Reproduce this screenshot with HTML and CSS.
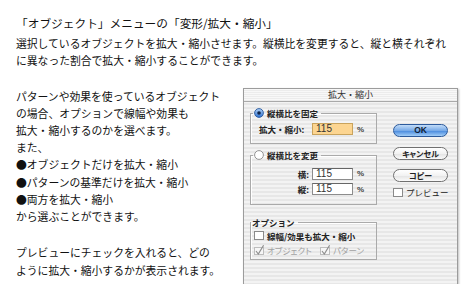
FILE: index.html
```html
<!DOCTYPE html>
<html lang="ja">
<head>
    <meta charset="UTF-8">
    <meta name="viewport" content="width=device-width, initial-scale=1.0">
    <title>変形/拡大・縮小</title>
    <link rel="stylesheet" href="styles.css">
</head>
<body>
    <div class="page">
        <h1 class="title">「オブジェクト」メニューの「変形/拡大・縮小」</h1>
        <p class="lead">選択しているオブジェクトを拡大・縮小させます。縦横比を変更すると、縦と横それぞれ<br>に異なった割合で拡大・縮小することができます。</p>

        <div class="main">
            <div class="desc">
                <p>パターンや効果を使っているオブジェクト<br>の場合、オプションで線幅や効果も<br>拡大・縮小するのかを選べます。<br>また、<br>●オブジェクトだけを拡大・縮小<br>●パターンの基準だけを拡大・縮小<br>●両方を拡大・縮小<br>から選ぶことができます。</p>
                <p>プレビューにチェックを入れると、どの<br>ように拡大・縮小するかが表示されます。</p>
            </div>

            <div class="dialog">
                <div class="titlebar">拡大・縮小</div>
                <div class="dialog-body">
                    <div class="groups">
                        <fieldset class="group group-fixed">
                            <legend>
                                <svg class="radio" viewBox="0 0 10 10" width="10" height="10">
                                    <defs>
                                        <linearGradient id="radioOn" x1="0" y1="0" x2="0" y2="1">
                                            <stop offset="0" stop-color="#b4d4f7"/>
                                            <stop offset="1" stop-color="#2b6fd0"/>
                                        </linearGradient>
                                    </defs>
                                    <circle cx="5" cy="5" r="4.4" fill="url(#radioOn)" stroke="#29599e" stroke-width="0.9"/>
                                    <circle cx="5" cy="5" r="1.8" fill="#0e2448"/>
                                </svg>
                                縦横比を固定
                            </legend>
                            <div class="row">
                                <span class="label">拡大・縮小:</span>
                                <span class="field active">115</span>
                                <span class="unit">%</span>
                            </div>
                        </fieldset>

                        <fieldset class="group group-free">
                            <legend>
                                <svg class="radio" viewBox="0 0 10 10" width="10" height="10">
                                    <circle cx="5" cy="5" r="4.4" fill="#fff" stroke="#8a8a8a" stroke-width="0.9"/>
                                </svg>
                                縦横比を変更
                            </legend>
                            <div class="row">
                                <span class="label right">横:</span>
                                <span class="field">115</span>
                                <span class="unit">%</span>
                            </div>
                            <div class="row">
                                <span class="label right">縦:</span>
                                <span class="field">115</span>
                                <span class="unit">%</span>
                            </div>
                        </fieldset>

                        <fieldset class="group group-options">
                            <legend>オプション</legend>
                            <div class="check-row">
                                <svg class="check" viewBox="0 0 10 9" width="10" height="9">
                                    <rect x="0.5" y="0.5" width="9" height="8" fill="#fff" stroke="#8a8a8a"/>
                                </svg>
                                <span>線幅/効果も拡大・縮小</span>
                            </div>
                            <div class="check-row disabled">
                                <svg class="check" viewBox="0 0 10 10" width="10" height="10">
                                    <rect x="0.5" y="2.5" width="9" height="7" fill="#f6f6f6" stroke="#bdbdbd"/>
                                    <path d="M2 6 L4.3 9 L9.6 0.3" stroke="#8f8f8f" stroke-width="1.2" fill="none"/>
                                </svg>
                                <span class="opt-object">オブジェクト</span>
                                <svg class="check" viewBox="0 0 10 10" width="10" height="10">
                                    <rect x="0.5" y="2.5" width="9" height="7" fill="#f6f6f6" stroke="#bdbdbd"/>
                                    <path d="M2 6 L4.3 9 L9.6 0.3" stroke="#8f8f8f" stroke-width="1.2" fill="none"/>
                                </svg>
                                <span>パターン</span>
                            </div>
                        </fieldset>
                    </div>

                    <div class="buttons">
                        <div class="btn btn-ok">OK</div>
                        <div class="btn btn-cancel">キャンセル</div>
                        <div class="btn btn-copy">コピー</div>
                        <div class="preview">
                            <svg class="check" viewBox="0 0 10 9" width="10" height="9">
                                <rect x="0.5" y="0.5" width="9" height="8" fill="#fff" stroke="#8a8a8a"/>
                            </svg>
                            <span>プレビュー</span>
                        </div>
                    </div>
                </div>
            </div>
        </div>
    </div>
</body>
</html>
```

FILE: styles.css
```css
body {
    margin: 0;
    background-color: #fff;
    color: #111;
    font-family: "Noto Sans CJK JP", "Noto Sans", sans-serif;
}

.page {
    padding: 14px 0 0 16px;
}

.title {
    margin: 0 0 3.5px;
    font-size: 11.7px;
    font-weight: normal;
    line-height: 17px;
    white-space: nowrap;
}

.lead {
    margin: 0;
    font-size: 10.8px;
    line-height: 17px;
    white-space: nowrap;
}

.main {
    display: flex;
    margin-top: 19px;
}

.desc {
    width: 227px;
    flex-shrink: 0;
    font-size: 10.8px;
    line-height: 17.2px;
    white-space: nowrap;
}

.desc p {
    margin: 0 0 19.3px;
}

/* dialog */

.dialog {
    width: 215px;
    box-sizing: border-box;
    border: 1px solid #9c9c9c;
    box-shadow: 1px 1px 2px rgba(0, 0, 0, 0.25);
    background: repeating-linear-gradient(#f3f3f3 0 2px, #e7e7e7 2px 4px);
    color: #222;
    font-size: 8.5px;
    font-weight: bold;
    white-space: nowrap;
}

.titlebar {
    height: 12px;
    line-height: 12px;
    border-bottom: 1px solid #a9a9a9;
    background: repeating-linear-gradient(#f8f8f8 0 1px, #ececec 1px 2px);
    text-align: center;
    font-size: 9px;
    font-weight: normal;
    color: #333;
}

.dialog-body {
    display: flex;
    gap: 16px;
    padding: 6px 9px 7.5px 6px;
}

.groups {
    width: 127px;
    flex-shrink: 0;
}

.group {
    margin: 0;
    padding: 0;
    border: 1px solid #aaa;
    box-shadow: inset 1px 1px 0 #fff;
    min-width: 0;
}

.group legend {
    display: flex;
    align-items: center;
    gap: 3px;
    height: 11px;
    margin-left: 2px;
    padding: 0 3px 0 1px;
    line-height: 11px;
}

.group-fixed {
    padding: 4.5px 0 8px;
}

.group-free {
    margin-top: 5.5px;
    padding: 7px 0 9px;
}

.group-options {
    margin-top: 11.5px;
    padding: 3px 0 4px;
}

.group-options legend {
    margin-left: 0;
}

.row {
    display: flex;
    align-items: center;
    height: 12px;
    padding-left: 8px;
}

.group-free .row + .row {
    margin-top: 3.5px;
}

.label {
    width: 50px;
    margin-right: 3px;
}

.label.right {
    text-align: right;
}

.field {
    width: 41px;
    height: 12px;
    box-sizing: border-box;
    border: 1px solid #8c8c8c;
    border-top-color: #666;
    background-color: #fff;
    padding-left: 3px;
    font-family: "Liberation Sans", Arial, sans-serif;
    font-size: 10px;
    font-weight: normal;
    line-height: 10px;
    color: #333;
}

.field.active {
    background-color: #fcd591;
    border-color: #c9a35c;
}

.unit {
    margin-left: 4px;
    font-family: "Liberation Sans", Arial, sans-serif;
    font-size: 8px;
    font-weight: bold;
    color: #444;
}

.check-row {
    display: flex;
    align-items: center;
    height: 10px;
    padding-left: 3px;
}

.check-row + .check-row {
    margin-top: 4px;
}

.check-row .check {
    flex-shrink: 0;
    margin-right: 3px;
}

.check-row.disabled {
    color: #a2a2a2;
    font-weight: normal;
    font-feature-settings: "palt";
}

.opt-object {
    width: 53px;
    overflow: hidden;
}

/* buttons */

.buttons {
    width: 55px;
    flex-shrink: 0;
}

.btn {
    height: 13px;
    box-sizing: border-box;
    border: 1px solid #707070;
    border-radius: 7px;
    background: linear-gradient(#ffffff, #f2f2f2 50%, #e2e2e2 51%, #fbfbfb);
    text-align: center;
    line-height: 11px;
    font-size: 8px;
    font-feature-settings: "palt";
}

.btn-ok {
    margin-top: 16px;
    border-color: #2c5a9c;
    background: linear-gradient(#c2dcf8, #79abe8 50%, #4486dc 51%, #a1cdf7);
    font-family: "Liberation Sans", Arial, sans-serif;
    font-size: 8.5px;
    color: #0f1d36;
}

.btn-cancel {
    margin-top: 10px;
}

.btn-copy {
    margin-top: 9px;
}

.preview {
    display: flex;
    align-items: center;
    gap: 3px;
    height: 9px;
    margin-top: 6px;
    font-weight: normal;
    color: #222;
}

.preview .check {
    flex-shrink: 0;
}
```
